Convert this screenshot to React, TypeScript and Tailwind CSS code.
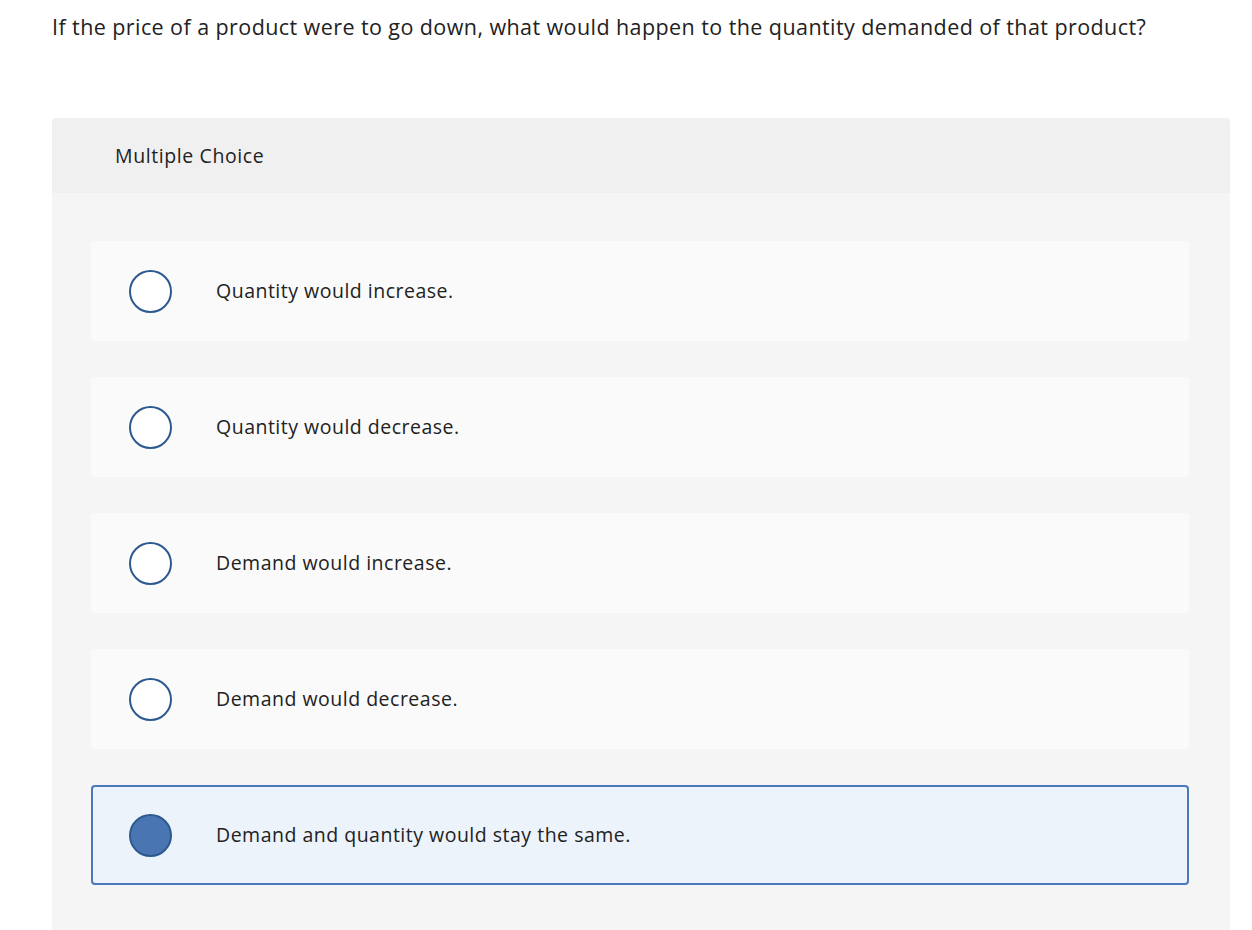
import { useState } from 'react'

const options = [
  'Quantity would increase.',
  'Quantity would decrease.',
  'Demand would increase.',
  'Demand would decrease.',
  'Demand and quantity would stay the same.',
]

export default function App() {
  const [selected, setSelected] = useState(4)

  return (
    <div className="min-h-[930px] bg-white text-[#222] [font-family:'Open_Sans',Lato,sans-serif]">
      <div className="px-[52px] pt-[12px]">
        <p className="text-[21.5px] leading-[30px] tracking-[0.42px]">
          If the price of a product were to go down, what would happen to the quantity demanded of that product?
        </p>
      </div>

      <div className="ml-[52px] mr-[22px] mt-[76px] rounded-t-[4px] bg-[#f5f5f5] overflow-hidden">
        <div className="h-[75px] bg-[#f0f0f0] flex items-center px-[63px]">
          <span className="text-[19.5px] tracking-[0.6px]">Multiple Choice</span>
        </div>

        <div className="flex flex-col gap-[36px] pl-[39px] pr-[41px] pt-[48px] pb-[46px]">
          {options.map((opt, i) => {
            const active = i === selected
            return (
              <button
                key={opt}
                onClick={() => setSelected(i)}
                className={
                  active
                    ? 'h-[100px] flex items-center rounded-[4px] border-2 border-[#4a78b8] bg-[#ecf3fb] pl-[36px] text-left'
                    : 'h-[100px] flex items-center rounded-[4px] border-2 border-transparent bg-[#fafafa] pl-[36px] text-left'
                }
              >
                <span
                  className={
                    active
                      ? 'w-[43px] h-[43px] rounded-full border-2 border-[#2d5a8e] bg-[#4a75b3] shrink-0'
                      : 'w-[43px] h-[43px] rounded-full border-2 border-[#2d5a8e] bg-white shrink-0'
                  }
                />
                <span className="ml-[44px] text-[19.5px] tracking-[0.5px]">{opt}</span>
              </button>
            )
          })}
        </div>
      </div>
    </div>
  )
}
